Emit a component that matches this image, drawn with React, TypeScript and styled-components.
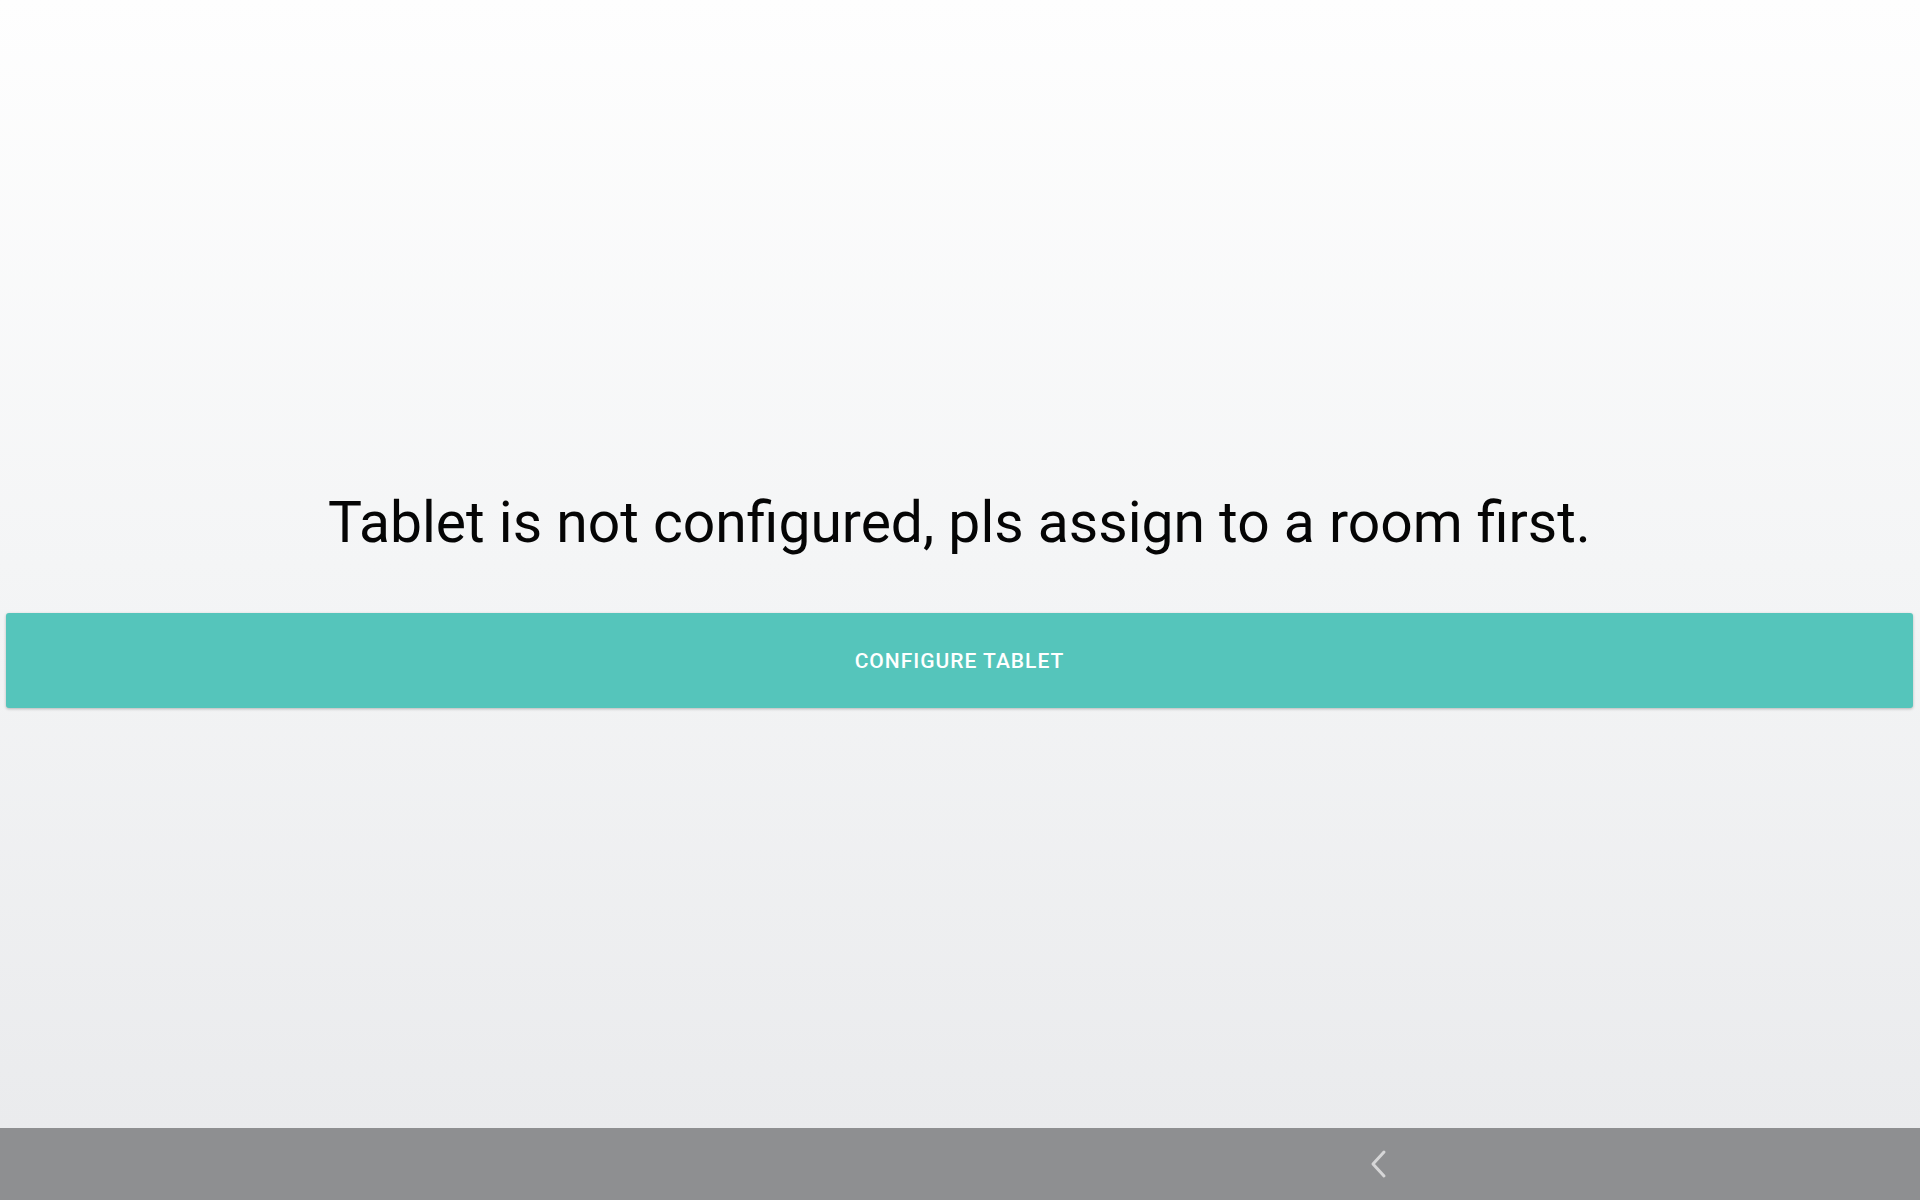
import React from "react";
import styled, { createGlobalStyle } from "styled-components";

const GlobalStyle = createGlobalStyle`
    html, body {
        margin: 0;
        padding: 0;
        height: 100%;
    }
    body {
        font-family: Roboto, "Liberation Sans", sans-serif;
    }
    #root {
        height: 100%;
    }
`;

const Screen = styled.div`
    width: 100%;
    height: 100vh;
    display: flex;
    flex-direction: column;
    overflow: hidden;
`;

const Content = styled.main`
    flex: 1;
    display: flex;
    flex-direction: column;
    align-items: center;
    padding: 489px 7px 0 6px;
    box-sizing: border-box;
    background: linear-gradient(to bottom, #fefefe 0%, #f4f5f6 50%, #eaebed 100%);
`;

const Message = styled.h1`
    margin: 0;
    font-size: 57px;
    line-height: 68px;
    font-weight: 400;
    color: #050505;
    text-align: center;
`;

const PrimaryButton = styled.button`
    margin-top: 56px;
    width: 100%;
    height: 95px;
    border: none;
    border-radius: 3px;
    background: #55c5bb;
    color: #ffffff;
    font-family: Roboto, "Liberation Sans", sans-serif;
    font-size: 21px;
    font-weight: 500;
    letter-spacing: 1px;
    text-transform: uppercase;
    box-shadow: 0 1px 3px rgba(0, 0, 0, 0.25);
    cursor: pointer;
`;

const NavBar = styled.nav`
    height: 72px;
    background: #8e8f91;
    display: flex;
    align-items: center;
    padding-left: 1366px;
    box-sizing: border-box;
`;

const NavButton = styled.button`
    width: 26px;
    height: 30px;
    padding: 0;
    border: none;
    background: transparent;
    display: flex;
    align-items: center;
    justify-content: center;
`;

const BackIcon = () => (
    <svg width="26" height="30" viewBox="0 0 26 30">
        <path d="M18 3 L7 15 L18 27" fill="none" stroke="#d6d6d7" strokeWidth="3" strokeLinecap="round" strokeLinejoin="round" />
    </svg>
);

export default function App() {
    return (
        <Screen>
            <GlobalStyle />
            <Content>
                <Message>Tablet is not configured, pls assign to a room first.</Message>
                <PrimaryButton>Configure Tablet</PrimaryButton>
            </Content>
            <NavBar>
                <NavButton aria-label="Back">
                    <BackIcon />
                </NavButton>
            </NavBar>
        </Screen>
    );
}
